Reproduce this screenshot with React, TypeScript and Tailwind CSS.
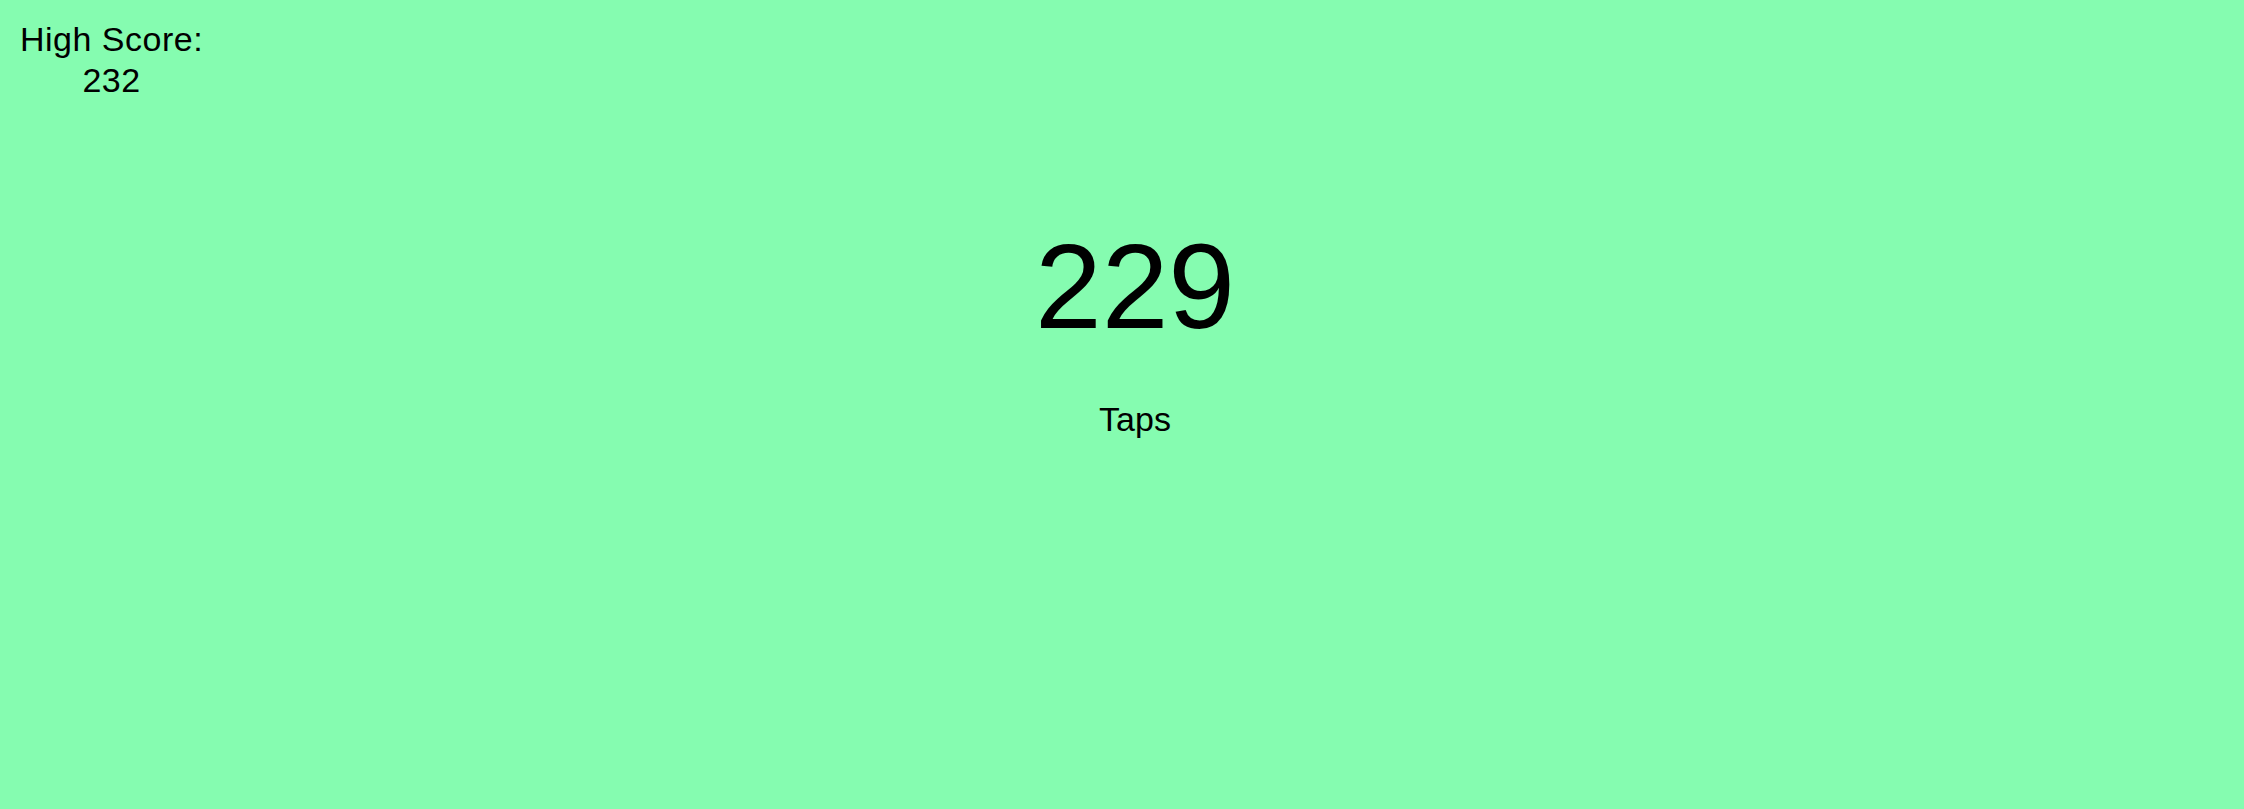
export default function App() {
  const highScore = 232;
  const taps = 229;

  return (
    <div className="h-[809px] w-full overflow-hidden bg-[#85fcb0] font-['Liberation_Sans',Arial,sans-serif] text-black">
      {/* high score, top-left */}
      <div className="w-fit pl-[20px] pt-[19px] text-center text-[34px] leading-[41px] tracking-[0.5px]">
        <p>High Score:</p>
        <p>{highScore}</p>
      </div>

      {/* current count */}
      <div className="flex flex-col items-center pl-[26px]">
        <p className="mt-[125px] text-[120px] leading-none">{taps}</p>
        <p className="mt-[53px] text-[34px] leading-[41px]">Taps</p>
      </div>
    </div>
  );
}
